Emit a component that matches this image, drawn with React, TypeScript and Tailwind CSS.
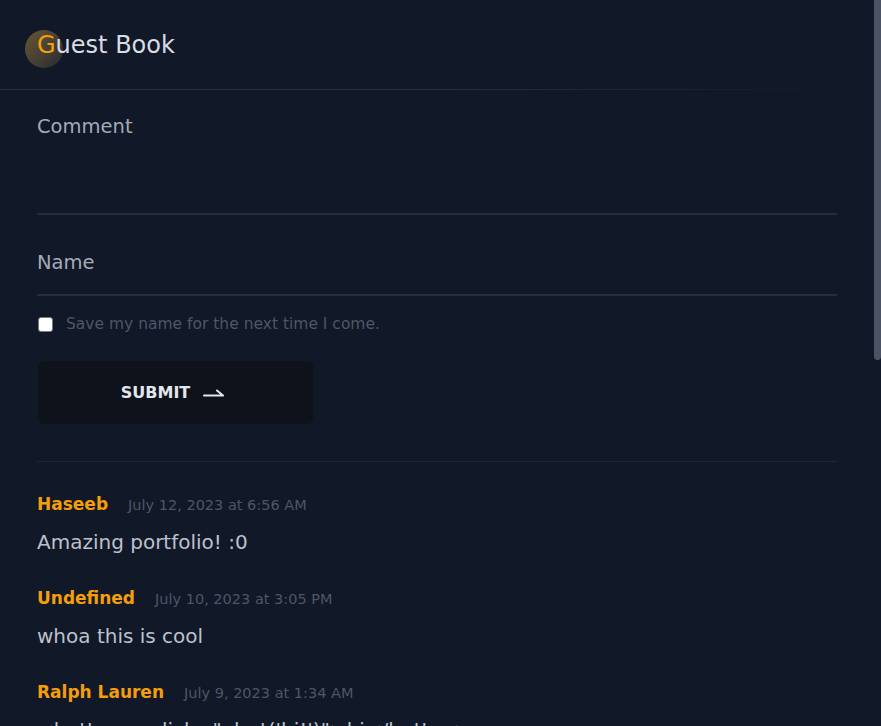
import React from "react";

const comments = [
  { name: "Haseeb", date: "July 12, 2023 at 6:56 AM", text: "Amazing portfolio! :0" },
  { name: "Undefined", date: "July 10, 2023 at 3:05 PM", text: "whoa this is cool" },
  { name: "Ralph Lauren", date: "July 9, 2023 at 1:34 AM", text: `<button onclick="alert('hi!')">hi</button>` },
  { name: "Sam", date: "July 8, 2023 at 11:12 PM", text: "nice work!" },
];

function HarpoonArrow() {
  return (
    <svg width="21" height="9" viewBox="0 0 21 9" fill="none" stroke="currentColor" strokeWidth="2" strokeLinecap="round">
      <path d="M1 7.5H20M14 2.5L20 7.5" />
    </svg>
  );
}

export default function App() {
  return (
    <div className="relative h-[726px] w-[881px] overflow-hidden bg-[#111827] font-['DejaVu_Sans',sans-serif]">
      {/* Header */}
      <div className="relative flex h-[89px] items-center px-[37px]">
        <div className="absolute left-[25px] top-[30px] h-[38px] w-[38px] rounded-full bg-linear-to-br from-[#6a5631] to-[#2a2c30]" />
        <h1 className="relative text-[24px] leading-8 text-[#d8dce3]">
          <span className="text-[#f59e0b]">G</span>uest Book
        </h1>
      </div>
      <div className="h-px w-[850px] bg-linear-to-r from-[#283041] via-[#283041] to-transparent" />

      <div className="pl-[37px] pr-[44px]">
        {/* Comment */}
        <div className="h-[125px] border-b-2 border-[#262d3b] pt-[23px]">
          <p className="text-[19.5px] leading-7 text-[#a3abb9]">Comment</p>
        </div>

        {/* Name */}
        <div className="mt-[34px] h-[47px] border-b-2 border-[#262d3b]">
          <p className="text-[19.5px] leading-7 text-[#a3abb9]">Name</p>
        </div>

        {/* Save */}
        <div className="mt-[18px] flex items-center gap-[13px]">
          <div className="ml-px h-[15px] w-[15px] rounded-[3px] border border-[#7a7a7a] bg-white" />
          <span className="text-[15.5px] leading-5 text-[#4e5666]">Save my name for the next time I come.</span>
        </div>

        {/* Submit */}
        <button className="ml-px mt-[27px] flex h-[63px] w-[275px] items-center justify-center gap-[13px] rounded-md bg-[#0e121b] pr-[6px] text-[16px] font-bold text-[#e3e6ec]">
          SUBMIT
          <HarpoonArrow />
        </button>

        <div className="mt-[37px] h-px bg-[#1f2735]" />

        {/* Comments */}
        <div className="mt-[28px] flex flex-col gap-[28px]">
          {comments.map((c) => (
            <div key={c.name}>
              <div className="flex items-baseline gap-[20px]">
                <span className="text-[17px] font-bold leading-7 text-[#f59e0b]">{c.name}</span>
                <span className="text-[14.5px] text-[#4e5666]">{c.date}</span>
              </div>
              <p className="mt-[10px] text-[20px] leading-7 text-[#bcc2cc]">{c.text}</p>
            </div>
          ))}
        </div>
      </div>

      {/* Scrollbar */}
      <div className="absolute right-0 top-0 h-[360px] w-[7px] rounded-b-[4px] bg-[#4a5263]" />
    </div>
  );
}
